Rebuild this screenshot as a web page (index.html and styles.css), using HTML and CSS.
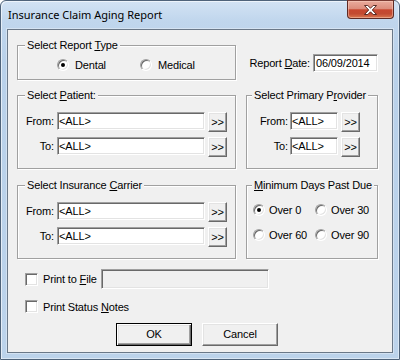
FILE: index.html
```html
<!DOCTYPE html>
<html>
<head>
<meta charset="utf-8">
<title>Insurance Claim Aging Report</title>
<link rel="stylesheet" href="styles.css">
</head>
<body>
<div class="window">
  <div class="titlebar">
    <span class="title">Insurance Claim Aging Report</span>
    <div class="close">
      <svg width="13" height="10" viewBox="0 0 13 10"><polygon points="0.5,0.5 3.8,0.5 6.5,3.2 9.2,0.5 12.5,0.5 8.3,5 12.5,9.5 9.2,9.5 6.5,6.8 3.8,9.5 0.5,9.5 4.7,5" fill="#fff" stroke="#4a1d17" stroke-width="0.9" stroke-linejoin="round"/></svg>
    </div>
  </div>
  <div class="client">
    <div class="grid">
      <div class="group g-left g-type">
        <div class="legend">Select Report <u>T</u>ype</div>
        <div class="radio-row">
          <div class="opt first"><span class="radio"><span class="dot"></span></span>Dental</div>
          <div class="opt"><span class="radio"></span>Medical</div>
        </div>
      </div>
      <div class="date-cell">
        <span class="date-label">Report <u>D</u>ate:</span>
        <div class="field date">06/09/2014</div>
      </div>

      <div class="group g-left g-range">
        <div class="legend">Select <u>P</u>atient:</div>
        <div class="field-row r1"><span class="lbl">From:</span><div class="field wide">&lt;ALL&gt;</div><button class="btn pick">&gt;&gt;</button></div>
        <div class="field-row r2"><span class="lbl">To:</span><div class="field wide">&lt;ALL&gt;</div><button class="btn pick">&gt;&gt;</button></div>
      </div>
      <div class="group g-right g-range provider">
        <div class="legend">Select Primary P<u>r</u>ovider</div>
        <div class="field-row r1"><span class="lbl">From:</span><div class="field narrow">&lt;ALL&gt;</div><button class="btn pick">&gt;&gt;</button></div>
        <div class="field-row r2"><span class="lbl">To:</span><div class="field narrow">&lt;ALL&gt;</div><button class="btn pick">&gt;&gt;</button></div>
      </div>

      <div class="group g-left g-range row3">
        <div class="legend">Select Insurance <u>C</u>arrier</div>
        <div class="field-row r1"><span class="lbl">From:</span><div class="field wide">&lt;ALL&gt;</div><button class="btn pick">&gt;&gt;</button></div>
        <div class="field-row r2"><span class="lbl">To:</span><div class="field wide">&lt;ALL&gt;</div><button class="btn pick">&gt;&gt;</button></div>
      </div>
      <div class="group g-right g-range row3 days">
        <div class="legend"><u>M</u>inimum Days Past Due</div>
        <div class="days-grid">
          <div class="opt"><span class="radio"><span class="dot"></span></span>Over 0</div>
          <div class="opt"><span class="radio"></span>Over 30</div>
          <div class="opt"><span class="radio"></span>Over 60</div>
          <div class="opt"><span class="radio"></span>Over 90</div>
        </div>
      </div>
    </div>

    <div class="options">
      <div class="opt-row file"><span class="check"></span><span class="opt-label">Print to <u>F</u>ile</span><div class="field path"></div></div>
      <div class="opt-row notes"><span class="check"></span><span>Print Status <u>N</u>otes</span></div>
    </div>

    <div class="actions">
      <button class="btn action default">OK</button>
      <button class="btn action">Cancel</button>
    </div>
  </div>
</div>
</body>
</html>
```

FILE: styles.css
```css
* { box-sizing: border-box; }

html, body {
  margin: 0;
  padding: 0;
}

body {
  width: 400px;
  height: 360px;
  overflow: hidden;
  background: #ffffff;
  font-family: "Liberation Sans", Arial, sans-serif;
  font-size: 11px;
  letter-spacing: -0.15px;
  color: #000;
}

u { text-underline-offset: 1px; }

.window {
  width: 400px;
  height: 360px;
  display: flex;
  flex-direction: column;
  border: 1px solid #4f637a;
  border-radius: 6px 6px 0 0;
  background: linear-gradient(to bottom, #d3e3f4 0, #c0d6ed 20px, #b9d1ea 60px, #bcd3eb 100%);
  box-shadow: inset 1px 1px 0 rgba(255, 255, 255, 0.6), inset -1px -1px 0 rgba(255, 255, 255, 0.45);
}

.titlebar {
  flex: none;
  height: 28px;
  display: flex;
  align-items: flex-start;
}

.title {
  margin: 6px 0 0 7px;
  font-family: "Noto Sans", "Open Sans", sans-serif;
  font-size: 11px;
  letter-spacing: 0;
  line-height: 15px;
  color: #000;
}

.close {
  margin: -1px 5px 0 auto;
  width: 47px;
  height: 19px;
  border: 1px solid #5e2a24;
  border-top-color: #7a3a32;
  border-radius: 0 0 4px 4px;
  background: linear-gradient(to bottom, #e9ab9d 0%, #dc8d7c 45%, #c7472f 52%, #c24a31 75%, #d9774f 100%);
  box-shadow: inset 0 0 0 1px rgba(255, 215, 200, 0.45);
  display: flex;
  align-items: center;
  justify-content: center;
}

.close svg { display: block; }

.client {
  flex: 1;
  margin: 0 6px 6px;
  border: 1px solid #6a7888;
  box-shadow: 0 0 0 1px rgba(255, 255, 255, 0.35);
  background: #f0f0f0;
  padding-top: 15px;
}

.grid {
  margin-left: 9px;
  display: grid;
  grid-template-columns: 219px 132px;
  column-gap: 10px;
  row-gap: 15px;
}

.group {
  border: 1px solid #a0a0a0;
  box-shadow: inset 1px 1px 0 #ffffff, 1px 1px 0 #ffffff;
}

.g-type { height: 35px; }
.g-range { height: 74px; }
.row3 { margin-top: 1px; }

.legend {
  display: table;
  margin: -7px 0 0 7px;
  padding: 0 2px;
  line-height: 13px;
  background: #f0f0f0;
  white-space: nowrap;
}

.g-right .legend { margin-left: 5px; }

.radio-row {
  display: flex;
  align-items: center;
  height: 13px;
  margin-top: 6px;
  padding-left: 39px;
}

.opt {
  display: flex;
  align-items: center;
  height: 13px;
  white-space: nowrap;
}

.opt.first { width: 83px; }

.radio {
  flex: none;
  width: 12px;
  height: 12px;
  margin-right: 6px;
  border-radius: 50%;
  border: 1px solid;
  border-color: #a0a0a0 #ffffff #ffffff #a0a0a0;
  box-shadow: inset 1px 1px 0 #696969, inset -1px -1px 0 #e3e3e3;
  background: #ffffff;
  display: flex;
  align-items: center;
  justify-content: center;
}

.dot {
  width: 4px;
  height: 4px;
  border-radius: 50%;
  background: #000;
}

.date-cell {
  display: flex;
  justify-content: flex-end;
  align-items: flex-start;
  padding-top: 9px;
}

.date-label {
  line-height: 18px;
  margin-right: 3px;
  white-space: nowrap;
}

.field {
  flex: none;
  height: 18px;
  border: 1px solid;
  border-color: #a0a0a0 #ffffff #ffffff #a0a0a0;
  box-shadow: inset 1px 1px 0 #696969, inset -1px -1px 0 #e3e3e3;
  background: #ffffff;
  line-height: 16px;
  padding-left: 1px;
  white-space: nowrap;
  overflow: hidden;
}

.field.date { width: 65px; padding-left: 2px; }
.field.wide { width: 148px; }
.field.narrow { width: 48px; }

.field-row {
  display: flex;
  align-items: flex-start;
  height: 20px;
}

.r1 { margin-top: 10px; }
.r2 { margin-top: 5px; }

.lbl {
  flex: none;
  width: 36px;
  margin-right: 3px;
  line-height: 18px;
  text-align: right;
}

.provider .lbl {
  width: 41px;
  margin-right: 2px;
}

.btn {
  font-family: inherit;
  font-size: 11px;
  letter-spacing: inherit;
  color: #000;
  padding: 0;
  margin: 0;
  border-radius: 0;
  background: #f0f0f0;
  border: 1px solid;
  border-color: #ffffff #696969 #696969 #ffffff;
  box-shadow: inset -1px -1px 0 #a0a0a0, inset 1px 1px 0 #e3e3e3;
  line-height: 13px;
}

.pick {
  flex: none;
  width: 19px;
  height: 20px;
  margin-left: 3px;
}

.days-grid {
  display: grid;
  grid-template-columns: 62px 62px;
  row-gap: 12px;
  margin-top: 11px;
  padding-left: 6px;
}

.days .radio { margin-right: 4px; }

.options {
  padding-left: 17px;
  margin-top: 10px;
}

.opt-row {
  display: flex;
  align-items: center;
  white-space: nowrap;
}

.file { height: 20px; }

.notes {
  height: 13px;
  margin-top: 11px;
}

.check {
  flex: none;
  width: 13px;
  height: 13px;
  margin-right: 5px;
  border: 1px solid;
  border-color: #a0a0a0 #ffffff #ffffff #a0a0a0;
  box-shadow: inset 1px 1px 0 #696969, inset -1px -1px 0 #e3e3e3;
  background: #ffffff;
}

.opt-label { width: 58px; }

.field.path {
  width: 168px;
  height: 20px;
  background: #f0f0f0;
}

.actions {
  display: flex;
  gap: 10px;
  padding-left: 108px;
  margin-top: 10px;
}

.action {
  width: 76px;
  height: 23px;
}

.btn.default {
  border: 1px solid #000000;
  box-shadow: inset 1px 1px 0 #ffffff, inset -1px -1px 0 #696969, inset -2px -2px 0 #a0a0a0, inset 2px 2px 0 #e3e3e3;
}
```
